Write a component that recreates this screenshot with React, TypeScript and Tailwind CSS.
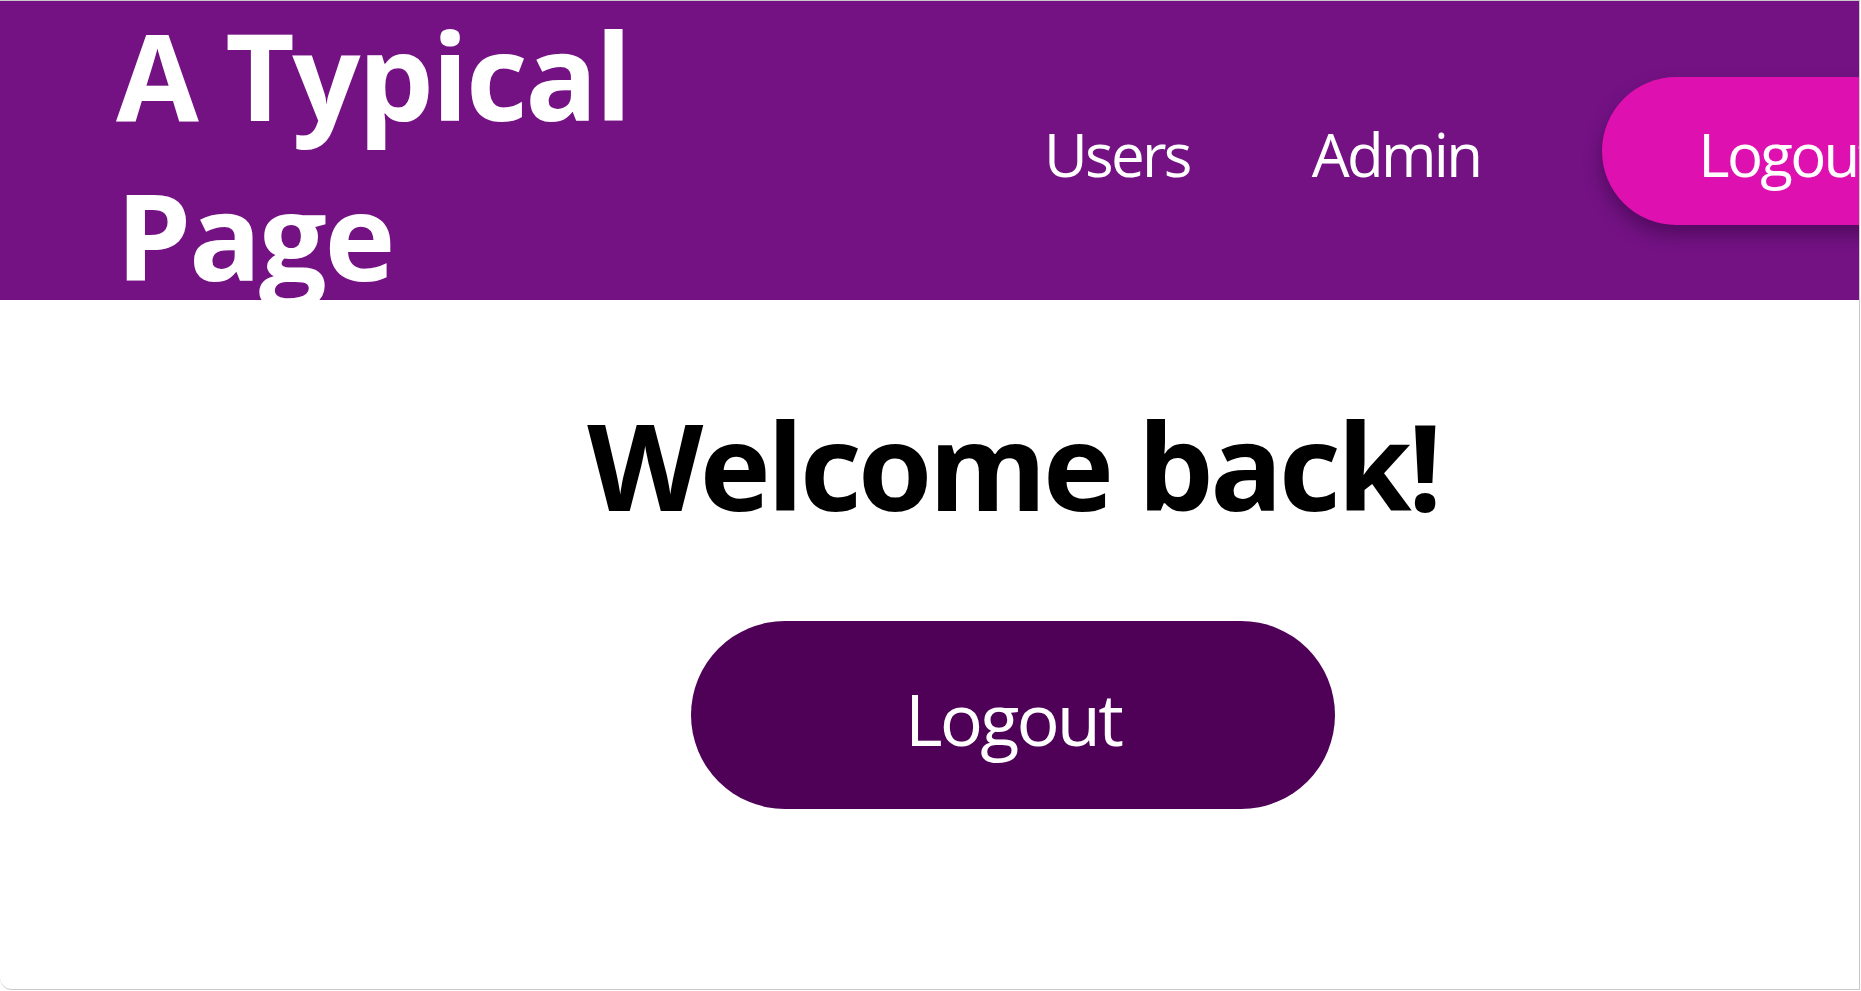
const NAV = ["Users", "Admin"];

export default function App() {
  return (
    <div className="h-[991px] w-[1861px] bg-white font-['Open_Sans',sans-serif]">
      <div className="h-[990px] w-[1860px] overflow-hidden rounded-bl-[12px] border-t border-r border-b border-[#c9c9c9] bg-white">
        <div className="w-[2026px]">
          <header className="flex h-[299px] items-center bg-[#741284] pl-[116px] text-white">
            <h1 className="w-[928px] shrink-0 pt-[8px] text-[120px] leading-[160px] font-bold tracking-[-0.02em]">
              A Typical
              <br />
              Page
            </h1>
            <nav className="flex items-center gap-[122px] text-[60px] tracking-[-0.045em]">
              {NAV.map((n) => (
                <a key={n} className="pt-[6px] leading-[80px]">
                  {n}
                </a>
              ))}
              <button className="rounded-full bg-[#de10b0] px-[96px] pt-[37px] pb-[31px] leading-[80px] text-white shadow-[0_10px_18px_rgba(40,0,50,0.45)]">
                Logout
              </button>
            </nav>
          </header>
          <main className="flex flex-col items-center pt-[85px]">
            <h2 className="text-[120px] leading-[160px] font-bold tracking-[-0.03em] text-black">Welcome back!</h2>
            <button className="mt-[76px] flex h-[188px] w-[644px] items-center justify-center rounded-full bg-[#4f0057] pt-[6px] text-[72px] tracking-[-0.04em] text-white">
              Logout
            </button>
          </main>
        </div>
      </div>
    </div>
  );
}
